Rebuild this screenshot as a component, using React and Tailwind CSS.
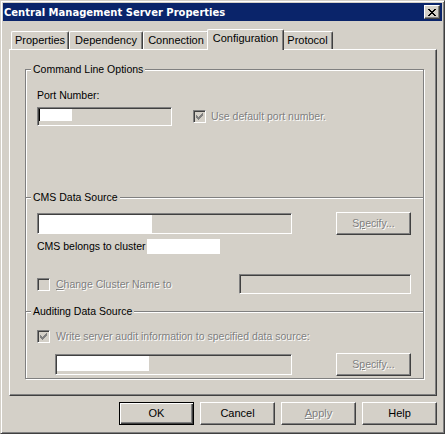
import React from "react";

const raised =
  "border border-t-white border-l-white border-r-[#404040] border-b-[#404040] shadow-[inset_-1px_-1px_0_#808080] bg-[#d4d0c8]";
const sunken =
  "border border-t-[#808080] border-l-[#808080] border-r-white border-b-white shadow-[inset_1px_1px_0_#404040]";
const dim = "text-[#808080] [text-shadow:1px_1px_0_#fff]";

function Check({ checked }) {
  return (
    <span
      className={`${sunken} flex h-[13px] w-[13px] shrink-0 items-center justify-center bg-[#d4d0c8]`}
    >
      {checked && (
        <svg width="7" height="7" viewBox="0 0 7 7" shapeRendering="crispEdges">
          <path d="M0 2h1v1h1v1h1v-1h1v-1h1v-1h1v-1h1v3h-1v1h-1v1h-1v1h-1v1h-1v-1h-1v-1h-1z" fill="#808080" />
        </svg>
      )}
    </span>
  );
}

function Tab({ label, width, active }) {
  if (active) {
    return (
      <div
        className={`relative z-10 -mx-[2px] -mb-[1px] flex h-[21px] items-center justify-center rounded-t-[2px] border-t border-l border-r border-t-white border-l-white border-r-[#404040] bg-[#d4d0c8] pb-[3px] shadow-[inset_-1px_0_0_#808080] ${width}`}
      >
        {label}
      </div>
    );
  }
  return (
    <div
      className={`flex h-[18px] items-center justify-center rounded-t-[2px] border-t border-l border-r border-t-white border-l-white border-r-[#404040] shadow-[inset_-1px_0_0_#808080] ${width}`}
    >
      {label}
    </div>
  );
}

function Legend({ children }) {
  return (
    <div className="-mt-[7px] ml-[5px] h-[13px] self-start bg-[#d4d0c8] px-[2px]">
      {children}
    </div>
  );
}

function Button({ children, isDefault, disabled }) {
  const edge = isDefault
    ? "border border-black shadow-[inset_1px_1px_0_#fff,inset_-1px_-1px_0_#404040,inset_-2px_-2px_0_#808080]"
    : raised;
  return (
    <div
      className={`flex h-[23px] w-[75px] shrink-0 items-center justify-center bg-[#d4d0c8] ${edge} ${disabled ? dim : "text-black"}`}
    >
      {children}
    </div>
  );
}

export default function App() {
  return (
    <div className="h-[434px] w-[445px] overflow-hidden border border-t-[#d4d0c8] border-l-[#d4d0c8] border-r-[#404040] border-b-[#404040] bg-[#d4d0c8] p-[2px] font-['Liberation_Sans',Arial,sans-serif] text-[10.5px] leading-[13px] text-black shadow-[inset_1px_1px_0_#fff,inset_-1px_-1px_0_#808080]">
      {/* title bar */}
      <div className="flex h-[18px] items-center bg-[#0a246a] pl-[1px] pr-[2px]">
        <span className="font-['DejaVu_Sans',sans-serif] text-[10px] font-bold text-white">
          Central Management Server Properties
        </span>
        <div className={`ml-auto flex h-[14px] w-[16px] items-center justify-center ${raised}`}>
          <svg width="8" height="7" viewBox="0 0 8 7" shapeRendering="crispEdges">
            <path
              d="M0 0h2v1h1v1h2v-1h1v-1h2v1h-1v1h-1v1h-1v1h1v1h1v1h1v1h-2v-1h-1v-1h-2v1h-1v1h-2v-1h1v-1h1v-1h1v-1h-1v-1h-1v-1h-1z"
              fill="#000"
            />
          </svg>
        </div>
      </div>

      <div className="pl-[6px] pr-[5px] pt-[8px]">
        {/* tabs */}
        <div className="flex h-[20px] items-end pl-[2px] text-[11px]">
          <Tab label="Properties" width="w-[58px]" />
          <Tab label="Dependency" width="w-[74px]" />
          <Tab label="Connection" width="w-[66px]" />
          <Tab label="Configuration" width="w-[77px]" active />
          <Tab label="Protocol" width="w-[51px]" />
        </div>

        {/* tab panel */}
        <div className="h-[347px] border border-t-white border-l-white border-r-[#404040] border-b-[#404040] shadow-[inset_-1px_-1px_0_#808080]">
          <div className="ml-[15px] mt-[19px] flex h-[310px] w-[399px] flex-col border border-[#808080] shadow-[inset_1px_1px_0_#fff,1px_1px_0_#fff]">
            {/* Command Line Options */}
            <div className="flex h-[127px] flex-col">
              <Legend>Command Line Options</Legend>
              <div className="ml-[11px] mt-[13px] h-[13px]">Port Number:</div>
              <div className="ml-[11px] mt-[5px] flex h-[19px] items-center">
                <div className={`${sunken} h-[19px] w-[135px] bg-[#d4d0c8]`}>
                  <div className="ml-[1px] mt-[1px] flex h-[12px]">
                    <span className="w-[1px] bg-black" />
                    <span className="w-[32px] bg-white" />
                  </div>
                </div>
                <div className="ml-[21px] flex items-center gap-[5px]">
                  <Check checked />
                  <span className={dim}>Use default port number.</span>
                </div>
              </div>
            </div>

            {/* CMS Data Source */}
            <div className="flex h-[114px] flex-col border-t border-[#808080] shadow-[inset_0_1px_0_#fff]">
              <Legend>CMS Data Source</Legend>
              <div className="ml-[11px] mr-[12px] mt-[8px] flex h-[23px] items-center">
                <div className={`${sunken} h-[21px] w-[255px] bg-[#d4d0c8]`}>
                  <div className="ml-[1px] mt-[1px] h-[18px] w-[113px] bg-white" />
                </div>
                <div className="ml-auto">
                  <Button disabled>
                    S<span className="underline">p</span>ecify...
                  </Button>
                </div>
              </div>
              <div className="ml-[11px] mt-[4px] flex h-[15px] items-center">
                <span className="w-[110px] shrink-0">CMS belongs to cluster</span>
                <span className="h-[15px] w-[73px] bg-white" />
              </div>
              <div className="ml-[11px] mr-[12px] mt-[20px] flex h-[20px] items-center">
                <Check />
                <span className={`ml-[6px] ${dim}`}>
                  <span className="underline">C</span>hange Cluster Name to
                </span>
                <div className={`${sunken} ml-auto h-[20px] w-[172px] bg-[#d4d0c8]`} />
              </div>
            </div>

            {/* Auditing Data Source */}
            <div className="flex h-[67px] flex-col border-t border-[#808080] shadow-[inset_0_1px_0_#fff]">
              <Legend>Auditing Data Source</Legend>
              <div className="ml-[11px] mt-[12px] flex h-[13px] items-center">
                <Check checked />
                <span className={`ml-[6px] ${dim}`}>
                  Write server audit information to specified data source:
                </span>
              </div>
              <div className="ml-[29px] mr-[12px] mt-[10px] flex h-[23px] items-center">
                <div className={`${sunken} h-[21px] w-[237px] bg-[#d4d0c8]`}>
                  <div className="ml-[1px] mt-[1px] h-[15px] w-[92px] bg-white" />
                </div>
                <div className="ml-auto">
                  <Button disabled>
                    S<span className="underline">p</span>ecify...
                  </Button>
                </div>
              </div>
            </div>
          </div>
        </div>

        {/* dialog buttons */}
        <div className="mt-[6px] flex justify-end gap-[6px] text-[11px]">
          <Button isDefault>OK</Button>
          <Button>Cancel</Button>
          <Button disabled>
            <span className="underline">A</span>pply
          </Button>
          <Button>Help</Button>
        </div>
      </div>
    </div>
  );
}
